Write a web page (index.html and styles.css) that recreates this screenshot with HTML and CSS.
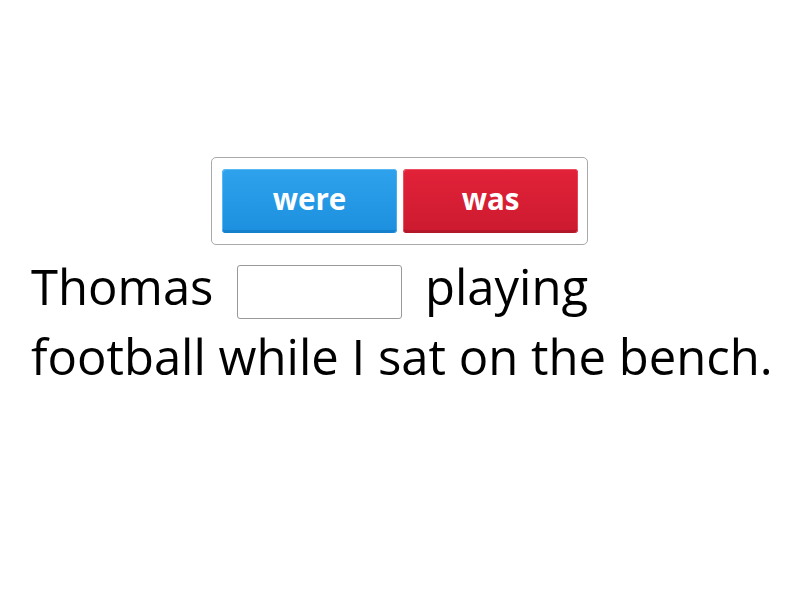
FILE: index.html
```html
<!DOCTYPE html>
<html>
<head>
<meta charset="utf-8">
<link rel="stylesheet" href="styles.css">
</head>
<body>
<div class="page">
  <div class="card">
    <div class="btn blue">were</div>
    <div class="btn red">was</div>
  </div>
  <p class="sentence">Thomas <span class="blank"></span> playing<br>football while I sat on the bench.</p>
</div>
</body>
</html>
```
FILE: styles.css
```css
html, body {
  margin: 0;
  padding: 0;
  background: #fff;
}
body {
  font-family: "Open Sans", sans-serif;
  color: #000;
}
.page {
  width: 800px;
  height: 600px;
  padding-top: 157px;
  box-sizing: border-box;
}
.card {
  width: 377px;
  height: 88px;
  margin-left: 211px;
  box-sizing: border-box;
  border: 1px solid #a9a9a9;
  border-radius: 5px;
  padding: 11px 9px 11px 10px;
  display: flex;
  gap: 6px;
}
.btn {
  flex: 1;
  border-radius: 4px;
  display: flex;
  align-items: center;
  justify-content: center;
  color: #fff;
  font-weight: 700;
  font-size: 29.5px;
  padding-bottom: 5px;
  box-sizing: border-box;
}
.blue {
  background: linear-gradient(#2ea2ec, #1c90de);
  box-shadow: inset 1px 1px 0 #5ab8f2, inset -1px 0 0 #4aaeee, inset 0 -3px 0 #1580cc;
}
.red {
  background: linear-gradient(#e22239, #cc1a2f);
  box-shadow: inset 1px 1px 0 #ea5060, inset -1px 0 0 #e64658, inset 0 -3px 0 #b5162a;
}
.sentence {
  margin: 6px 0 0 0;
  padding: 0 10px 0 31px;
  font-size: 49px;
  line-height: 70px;
  white-space: nowrap;
}
.blank {
  display: inline-block;
  width: 165px;
  height: 54px;
  box-sizing: border-box;
  border: 1px solid #999;
  border-radius: 3px;
  vertical-align: middle;
  margin: 0 10px 0 11px;
}
```
